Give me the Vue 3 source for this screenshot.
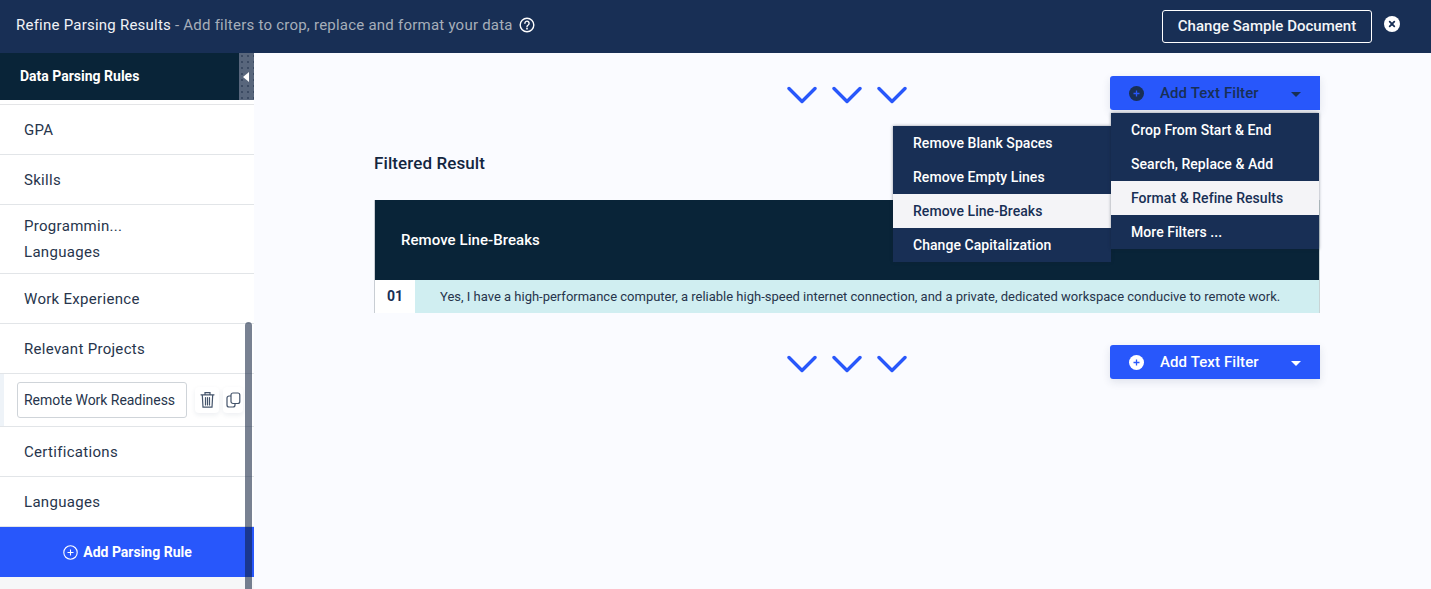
<script setup>
const before = [
  { name: 'GPA' },
  { name: 'Skills' },
  { name: 'Programmin...', second: 'Languages' },
  { name: 'Work Experience' },
  { name: 'Relevant Projects' }
]
const after = ['Certifications', 'Languages']
const menuA = ['Remove Blank Spaces', 'Remove Empty Lines', 'Remove Line-Breaks', 'Change Capitalization']
const menuB = ['Crop From Start & End', 'Search, Replace & Add', 'Format & Refine Results', 'More Filters ...']
</script>

<template>
  <div class="page">
    <header class="top">
      <div class="title">
        <span class="t1">Refine Parsing Results</span><span class="t2"> - Add filters to crop, replace and format your data</span>
        <svg class="help" width="16" height="16" viewBox="0 0 16 16" fill="none">
          <circle cx="8" cy="8" r="6.8" stroke="#fff" stroke-width="1.4" />
          <path d="M5.9 6.3a2.1 2.1 0 1 1 3.3 1.7c-.8.5-1.2.9-1.2 1.7" stroke="#fff" stroke-width="1.4" stroke-linecap="round" />
          <circle cx="8" cy="11.7" r=".9" fill="#fff" />
        </svg>
      </div>
      <div class="top-right">
        <button class="change">Change Sample Document</button>
        <svg class="close" width="16" height="16" viewBox="0 0 16 16">
          <circle cx="8" cy="8" r="8" fill="#fff" />
          <path d="M5.7 5.7l4.6 4.6M10.3 5.7l-4.6 4.6" stroke="#182f55" stroke-width="1.8" stroke-linecap="round" />
        </svg>
      </div>
    </header>

    <div class="body">
      <aside class="side">
        <div class="side-head">
          <span class="side-title">Data Parsing Rules</span>
          <div class="collapse"><span class="tri"></span></div>
        </div>
        <div class="gap"></div>
        <div v-for="r in before" :key="r.name" class="rule" :class="{ tall: r.second }">
          <div>{{ r.name }}</div>
          <div v-if="r.second">{{ r.second }}</div>
        </div>
        <div class="rule edit">
          <div class="field">Remote Work Readiness</div>
          <div class="tool">
            <svg width="15" height="18" viewBox="0 0 15 18" fill="none" stroke="#44546b" stroke-width="1.2" stroke-linecap="round">
              <path d="M1 3.800h13M5 3.500V1.700h5v1.800M2.300 4l.7 12.200h9L12.700 4M5.500 6.500v7.500M7.500 6.500v7.500M9.500 6.500v7.500" />
            </svg>
          </div>
          <div class="tool small">
            <svg width="15" height="16" viewBox="0 0 15 16" fill="none" stroke="#44546b" stroke-width="1.200">
              <rect x="5" y="1" width="8.800" height="10.500" rx="2" />
              <path d="M5 4H3a2 2 0 0 0-2 2v7a2 2 0 0 0 2 2h4a2 2 0 0 0 2-2v-1.500" />
            </svg>
          </div>
        </div>
        <div v-for="r in after" :key="r" class="rule">{{ r }}</div>
        <button class="add-rule">
          <svg width="15" height="15" viewBox="0 0 15 15" fill="none" stroke="#fff" stroke-width="1.100">
            <circle cx="7.500" cy="7.500" r="6.700" />
            <path d="M7.500 4.500v6M4.500 7.500h6" />
          </svg>
          Add Parsing Rule
        </button>
        <div class="side-foot"></div>
        <div class="side-scroll"></div>
      </aside>

      <main class="main">
        <div class="tools">
          <div class="chevrons">
            <svg v-for="n in 3" :key="n" width="30" height="18" viewBox="0 0 30 18" fill="none">
              <path d="M2 2.500L15 15.500L28 2.500" stroke="#2857fb" stroke-width="3.400" stroke-linecap="round" stroke-linejoin="round" />
            </svg>
          </div>
          <div class="filter dim">
            <svg width="15" height="15" viewBox="0 0 15 15">
              <circle cx="7.500" cy="7.500" r="7.500" fill="#182f55" />
              <path d="M7.500 4.500v6M4.500 7.500h6" stroke="#2857fb" stroke-width="1.300" />
            </svg>
            <span class="filter-label">Add Text Filter</span>
            <span class="caret"></span>
          </div>
          <ul class="menu menu-a">
            <li v-for="m in menuA" :key="m" :class="{ on: m === 'Remove Line-Breaks' }">{{ m }}</li>
          </ul>
          <ul class="menu menu-b">
            <li v-for="m in menuB" :key="m" :class="{ on: m === 'Format & Refine Results' }">{{ m }}</li>
          </ul>
        </div>

        <h2 class="result">Filtered Result</h2>

        <section class="table">
          <div class="table-head">Remove Line-Breaks</div>
          <div class="table-row">
            <div class="num">01</div>
            <div class="cell">Yes, I have a high-performance computer, a reliable high-speed internet connection, and a private, dedicated workspace conducive to remote work.</div>
          </div>
        </section>

        <div class="tools second">
          <div class="chevrons">
            <svg v-for="n in 3" :key="n" width="30" height="18" viewBox="0 0 30 18" fill="none">
              <path d="M2 2.500L15 15.500L28 2.500" stroke="#2857fb" stroke-width="3.400" stroke-linecap="round" stroke-linejoin="round" />
            </svg>
          </div>
          <div class="filter">
            <svg width="15" height="15" viewBox="0 0 15 15">
              <circle cx="7.500" cy="7.500" r="7.500" fill="#fff" />
              <path d="M7.500 4.500v6M4.500 7.500h6" stroke="#2857fb" stroke-width="1.300" />
            </svg>
            <span class="filter-label">Add Text Filter</span>
            <span class="caret"></span>
          </div>
        </div>
      </main>
    </div>
  </div>
</template>

<style scoped>
.page {
  width: 1431px;
  height: 589px;
  overflow: hidden;
  background: #fafbff;
  font-family: Roboto, "Liberation Sans", sans-serif;
  color: #182f55;
}
.top {
  height: 53px;
  background: #182f55;
  display: flex;
  align-items: center;
  justify-content: space-between;
  padding: 0 31px 3px 16px;
  box-sizing: border-box;
}
.title {
  display: flex;
  align-items: center;
  font-size: 15px;
  letter-spacing: .23px;
  white-space: pre;
}
.t1 { color: #f0f2f6; }
.t2 { color: #a6aeba; }
.help { margin-left: 6px; }
.top-right {
  display: flex;
  align-items: center;
  gap: 12px;
  padding-top: 3px;
}
.close { margin-top: -5px; }
.change {
  width: 210px;
  height: 33px;
  padding: 0 0 2px;
  background: transparent;
  border: 1px solid #fff;
  border-radius: 3px;
  color: #f4f6f9;
  font: 500 15px Roboto, sans-serif;
  letter-spacing: .02px;
}
.body {
  display: flex;
  height: 536px;
}
.side {
  width: 254px;
  flex: none;
  background: #fff;
  position: relative;
  color: #27354c;
  font-size: 15px;
}
.side-head {
  height: 47px;
  background: #092438;
  display: flex;
  align-items: center;
  justify-content: space-between;
  color: #fff;
}
.side-title {
  margin: -1px 0 0 20px;
  font-size: 14px;
  font-weight: 700;
}
.collapse {
  width: 15px;
  height: 47px;
  background-color: #58667c;
  background-image: radial-gradient(circle, #2c3c55 .6px, transparent .9px);
  background-size: 6px 6px;
  display: flex;
  align-items: center;
  justify-content: center;
}
.tri {
  width: 0;
  height: 0;
  border-style: solid;
  border-width: 5px 6px 5px 0;
  border-color: transparent #fff transparent transparent;
  margin-left: -1px;
}
.gap {
  height: 4px;
  border-bottom: 1px solid #e4e5e7;
}
.rule {
  height: 50px;
  box-sizing: border-box;
  border-bottom: 1px solid #e2e5e8;
  padding-left: 24px;
  display: flex;
  flex-direction: column;
  justify-content: center;
  letter-spacing: .3px;
}
.rule.tall {
  height: 69px;
  line-height: 26px;
}
.rule.edit {
  height: 53px;
  padding-left: 17px;
  flex-direction: row;
  justify-content: flex-start;
  align-items: center;
  position: relative;
}
.rule.edit::before {
  content: "";
  position: absolute;
  left: 0;
  top: 0;
  bottom: 0;
  width: 4px;
  background: #eef3f8;
}
.field {
  width: 170px;
  height: 36px;
  box-sizing: border-box;
  border: 1px solid #cfd4d9;
  border-radius: 3px;
  font-size: 14px;
  line-height: 34px;
  padding-left: 6px;
  letter-spacing: -.04px;
  white-space: nowrap;
}
.tool {
  width: 24px;
  height: 26px;
  margin-left: 8px;
  border-radius: 4px;
  display: flex;
  align-items: center;
  justify-content: center;
  box-shadow: 0 2px 5px rgba(30, 50, 90, .08);
  flex: none;
}
.tool.small {
  width: 20px;
  margin-left: 4px;
}
.add-rule {
  width: 254px;
  height: 50px;
  display: flex;
  align-items: center;
  justify-content: center;
  gap: 5px;
  padding: 0 0 0 1px;
  border: 0;
  background: #2857fb;
  color: #fff;
  font: 700 14px Roboto, sans-serif;
}
.side-foot {
  height: 12px;
  background: #f6f7f8;
}
.side-scroll {
  position: absolute;
  left: 245px;
  top: 269px;
  width: 7px;
  height: 280px;
  border-radius: 4px;
  background: rgba(15, 30, 60, .56);
}
.main {
  flex: 1;
  min-width: 0;
  padding: 23px 111px 0 120px;
}
.tools {
  position: relative;
  height: 34px;
}
.chevrons {
  position: absolute;
  left: 413px;
  top: 10px;
  display: flex;
  gap: 15px;
  line-height: 0;
}
.tools.second { margin-top: 32px; }
.filter {
  position: absolute;
  right: 0;
  top: 0;
  width: 210px;
  height: 34px;
  box-sizing: border-box;
  padding-left: 19px;
  display: flex;
  align-items: center;
  background: #2857fb;
  border-radius: 3px 0 0 3px;
  color: #fff;
  font-size: 15px;
  font-weight: 500;
  box-shadow: 0 3px 8px rgba(30, 50, 90, .12);
}
.filter.dim { color: #182f55; }
.filter-label {
  margin-left: 16px;
  letter-spacing: .1px;
}
.caret {
  margin-left: 32px;
  width: 0;
  height: 0;
  border-style: solid;
  border-width: 5px 5px 0;
  border-color: #fff transparent transparent;
  margin-top: 3px;
}
.filter.dim .caret { border-top-color: #182f55; }
.menu {
  position: absolute;
  z-index: 2;
  margin: 0;
  padding: 0;
  list-style: none;
  background: #182f55;
  color: #fff;
  font-size: 14px;
  font-weight: 500;
  box-shadow: 0 0 3px rgba(20, 30, 50, .45);
}
.menu li {
  height: 34px;
  line-height: 34px;
  padding-left: 20px;
  box-sizing: border-box;
  letter-spacing: .05px;
  white-space: nowrap;
}
.menu li.on {
  background: #f4f4f7;
  color: #182f55;
}
.menu-a {
  left: 519px;
  top: 50px;
  width: 218px;
}
.menu-b {
  left: 737px;
  top: 37px;
  width: 208px;
  z-index: 3;
}
.result {
  margin: 43px 0 0;
  font-size: 17px;
  line-height: 20px;
  font-weight: 500;
  color: #13263f;
  height: 43px;
  letter-spacing: .1px;
}
.table {
  margin-top: 4px;
  border-left: 1px solid #c9ced4;
  border-right: 1px solid #c9d4d6;
}
.table-head {
  height: 80px;
  background: #092438;
  color: #fff;
  display: flex;
  align-items: center;
  padding-left: 26px;
  font-size: 15px;
  font-weight: 500;
  letter-spacing: .06px;
}
.table-row {
  display: flex;
  height: 33px;
  align-items: center;
}
.num {
  width: 40px;
  height: 33px;
  line-height: 33px;
  background: #fff;
  text-align: center;
  font-size: 14px;
  font-weight: 700;
  flex: none;
}
.cell {
  flex: 1;
  height: 33px;
  line-height: 33px;
  background: #d0eef1;
  padding-left: 25px;
  font-size: 13px;
  color: #27354c;
  white-space: nowrap;
}
</style>

<style>
html, body { background: #fafbff; }
</style>
